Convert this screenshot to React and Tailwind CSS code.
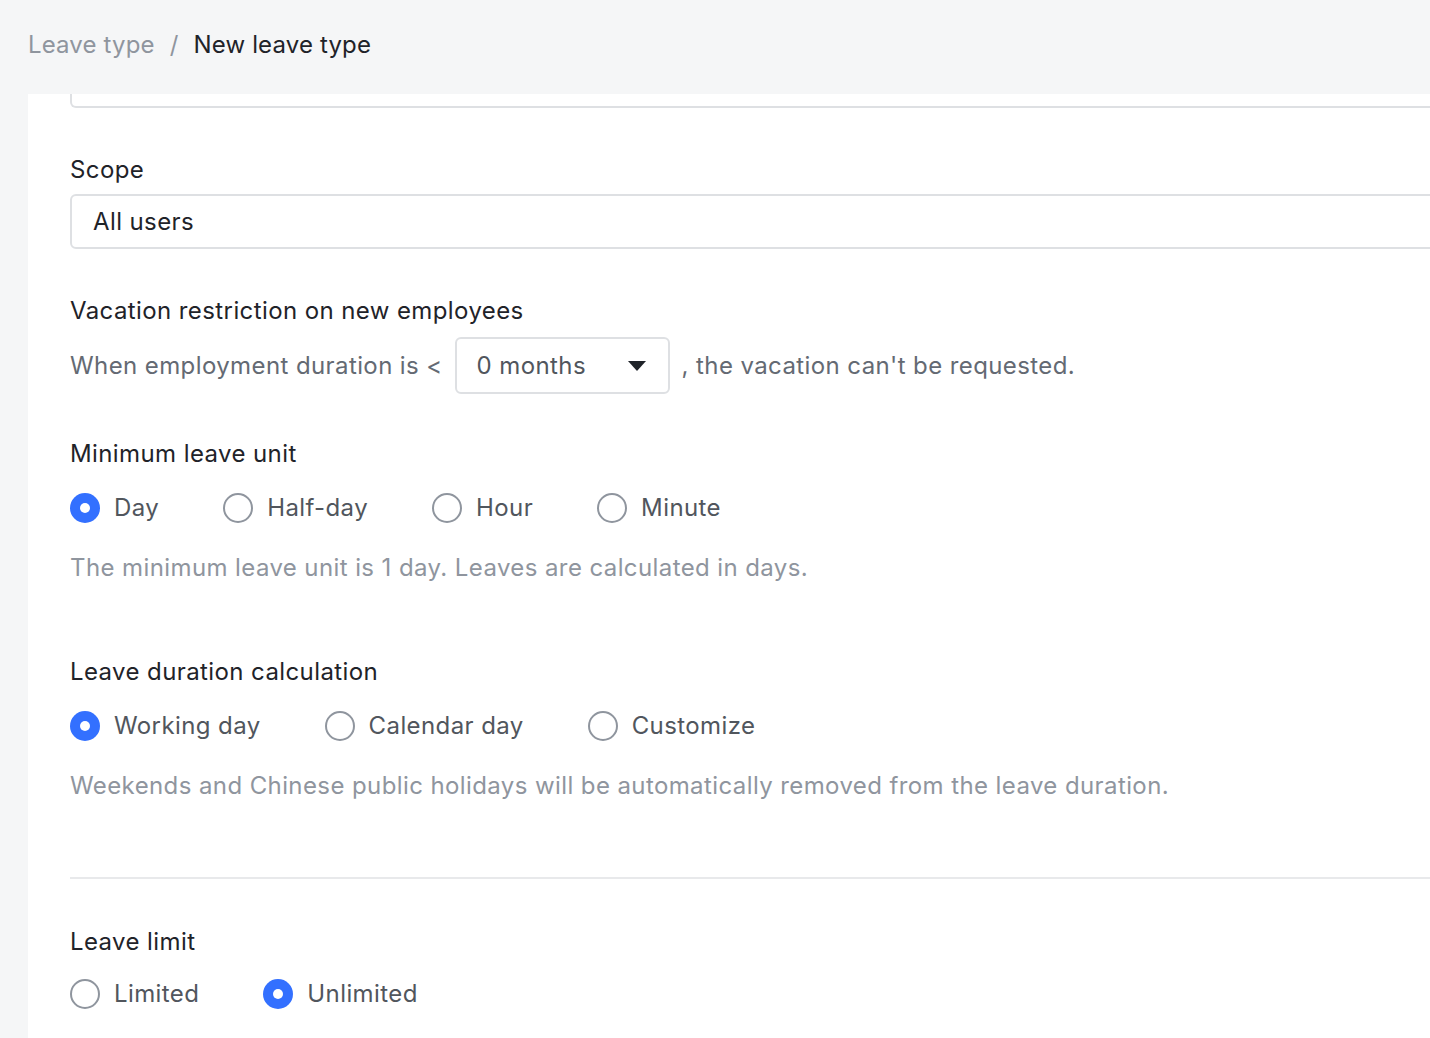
import { useState } from "react";

const font = { fontFamily: "Inter, 'Noto Sans', sans-serif" };

export default function App() {
  const [unit, setUnit] = useState("day");
  const [calc, setCalc] = useState("working");
  const [limit, setLimit] = useState("unlimited");

  return (
    <main
      className="min-h-screen w-full overflow-hidden bg-[#f5f6f7] tracking-[0.4px] text-[#1f2329]"
      style={font}
    >
      {/* BREADCRUMB */}
      <div className="flex h-[94px] items-center pb-[4px] pl-[28px] text-[24px] tracking-[0.15px]">
        <span className="text-[#8f959e]">Leave type</span>
        <span className="mx-[15px] text-[#8f959e]">/</span>
        <span className="text-[#1f2329]">New leave type</span>
      </div>

      {/* PANEL */}
      <div className="ml-[28px] min-h-[944px] w-[1460px] bg-white pl-[42px] pb-[40px]">
        {/* scrolled-off input */}
        <div className="h-[14px] rounded-b-[6px] border-x-2 border-b-2 border-[#dee0e3]" />

        <Label className="mt-[45px]">Scope</Label>
        <div className="mt-[7px] flex h-[55px] items-center rounded-[6px] border-2 border-[#dee0e3] pl-[21px] text-[24px] text-[#1f2329]">
          All users
        </div>

        <Label className="mt-[45px]">Vacation restriction on new employees</Label>
        <div className="mt-[9px] flex items-center text-[24px] text-[#646a73]">
          <span>When employment duration is &lt;</span>
          <div className="ml-[12px] mr-[12px] flex h-[57px] w-[215px] items-center justify-between rounded-[6px] border-2 border-[#dee0e3] pl-[20px] pr-[22px] text-[#1f2329]">
            <span className="text-[#51565d]">0 months</span>
            <svg width="18" height="10" viewBox="0 0 18 10">
              <path d="M0 0 L18 0 L9 10 Z" fill="#1f2329" />
            </svg>
          </div>
          <span>, the vacation can't be requested.</span>
        </div>

        <Label className="mt-[43px]">Minimum leave unit</Label>
        <div className="mt-[20px] flex items-center gap-[64px]">
          <Radio checked={unit === "day"} onClick={() => setUnit("day")} label="Day" />
          <Radio checked={unit === "half"} onClick={() => setUnit("half")} label="Half-day" />
          <Radio checked={unit === "hour"} onClick={() => setUnit("hour")} label="Hour" />
          <Radio checked={unit === "minute"} onClick={() => setUnit("minute")} label="Minute" />
        </div>
        <Helper className="mt-[26px]">
          The minimum leave unit is 1 day. Leaves are calculated in days.
        </Helper>

        <Label className="mt-[70px]">Leave duration calculation</Label>
        <div className="mt-[20px] flex items-center gap-[64px]">
          <Radio checked={calc === "working"} onClick={() => setCalc("working")} label="Working day" />
          <Radio checked={calc === "calendar"} onClick={() => setCalc("calendar")} label="Calendar day" />
          <Radio checked={calc === "custom"} onClick={() => setCalc("custom")} label="Customize" />
        </div>
        <Helper className="mt-[26px]">
          Weekends and Chinese public holidays will be automatically removed from the leave duration.
        </Helper>

        {/* DIVIDER */}
        <div className="mt-[74px] h-[2px] bg-[#e8e9eb]" />

        <Label className="mt-[46px]">Leave limit</Label>
        <div className="mt-[18px] flex items-center gap-[64px]">
          <Radio checked={limit === "limited"} onClick={() => setLimit("limited")} label="Limited" />
          <Radio checked={limit === "unlimited"} onClick={() => setLimit("unlimited")} label="Unlimited" />
        </div>
      </div>
    </main>
  );
}

/* ---------------- PARTS ---------------- */

function Label({ children, className = "" }) {
  return (
    <div className={"h-[34px] text-[24px] leading-[34px] text-[#1f2329] " + className}>
      {children}
    </div>
  );
}

function Helper({ children, className = "" }) {
  return (
    <div className={"h-[34px] text-[24px] leading-[34px] text-[#8f959e] " + className}>
      {children}
    </div>
  );
}

function Radio({ checked, label, onClick }) {
  return (
    <button
      type="button"
      onClick={onClick}
      className="flex h-[34px] items-center gap-[14px] text-[24px] text-[#51565d]"
    >
      {checked ? (
        <span className="flex h-[30px] w-[30px] items-center justify-center rounded-full bg-[#3370ff]">
          <span className="h-[10px] w-[10px] rounded-full bg-white" />
        </span>
      ) : (
        <span className="h-[30px] w-[30px] rounded-full border-2 border-[#8f959e]" />
      )}
      <span>{label}</span>
    </button>
  );
}
